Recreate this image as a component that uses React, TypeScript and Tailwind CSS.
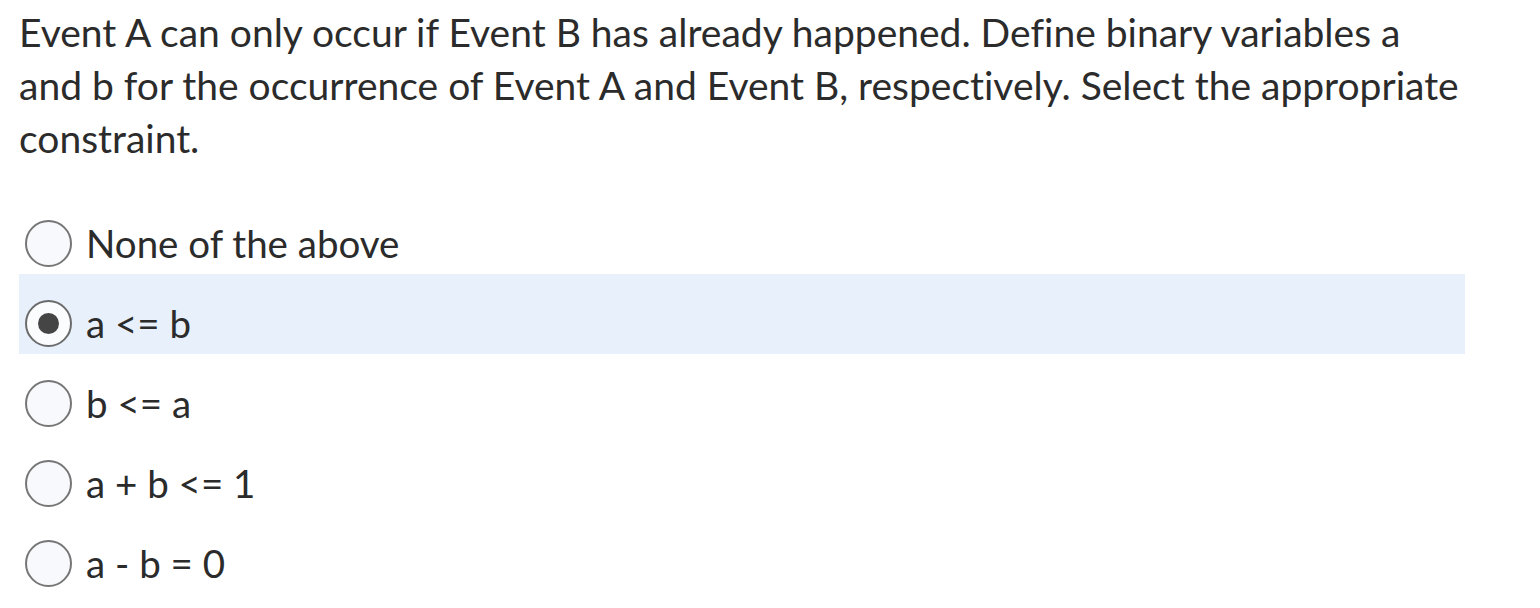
import React from "react";

const options = [
  { id: "none", label: "None of the above" },
  { id: "a-le-b", label: "a <= b" },
  { id: "b-le-a", label: "b <= a" },
  { id: "sum", label: "a + b <= 1" },
  { id: "diff", label: "a - b = 0" },
];

const Radio = ({ checked }: { checked: boolean }) => (
  <span
    className={
      "flex h-[47px] w-[47px] shrink-0 items-center justify-center rounded-full border-2 " +
      (checked ? "border-[#6b6b6b] bg-[#fbfcfe]" : "border-[#767676] bg-[#f7f9fc]")
    }
  >
    {checked && <span className="h-[21px] w-[21px] rounded-full bg-[#454545]" />}
  </span>
);

export default function App() {
  const [selected, setSelected] = React.useState("a-le-b");

  return (
    <div
      className="w-[1465px] bg-white pl-[19px] text-[39px] text-[#2b2b2b] [font-variant-ligatures:none]"
      style={{ fontFamily: "Lato, 'Open Sans', sans-serif" }}
    >
      <p className="pt-[6px] leading-[53px]">
        Event A can only occur if Event B has already happened. Define binary variables a and b for the
        occurrence of Event A and Event B, respectively. Select the appropriate constraint.
      </p>

      <div className="mt-[29px] flex flex-col">
        {options.map((opt) => {
          const checked = selected === opt.id;
          return (
            <label
              key={opt.id}
              onClick={() => setSelected(opt.id)}
              className={
                "flex h-[80px] cursor-pointer items-start gap-[14px] pl-[6px] pt-[26px] " +
                (checked ? "bg-[#e8f1fb]" : "")
              }
            >
              <Radio checked={checked} />
              <span className="text-[38.5px] leading-[46px]">{opt.label}</span>
            </label>
          );
        })}
      </div>
    </div>
  );
}
